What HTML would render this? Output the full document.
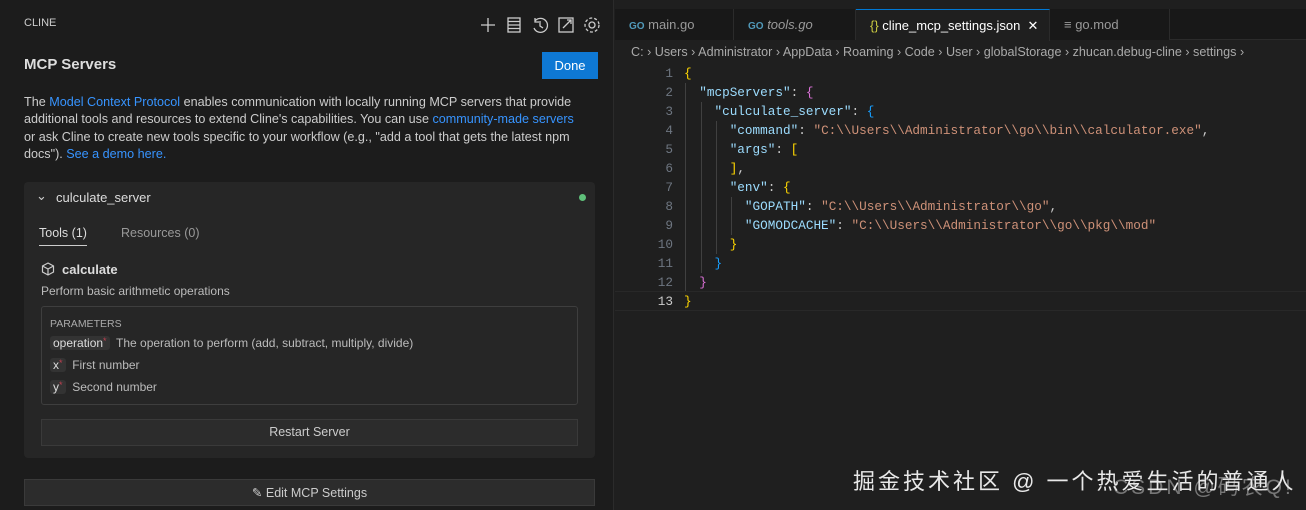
<!DOCTYPE html>
<html><head><meta charset="utf-8"><style>
*{box-sizing:border-box;margin:0;padding:0}
body{width:1306px;height:510px;overflow:hidden;background:#1f1f1f;font-family:"Segoe UI","Liberation Sans","Noto Sans CJK SC",sans-serif;color:#ccc;position:relative}
.abs{position:absolute}
#left{left:0;top:0;width:614px;height:510px;background:#1c1c1c;border-right:1px solid #2b2b2b}
.link{color:#3794ff}
#card{left:24px;top:182px;width:571px;height:276px;background:#262626;border-radius:4px}
.tag{background:#333;border-radius:3px;padding:0 3px;color:#ddd}
.star{color:#c04050;font-size:9px;vertical-align:top}
#right{left:615px;top:0;width:691px;height:510px;background:#1f1f1f}
.tab{position:absolute;top:9px;height:31px;background:#181818;font-size:13px;line-height:31px;padding-left:14px;color:#999;border-right:1px solid #2b2b2b}
.code{font-family:"Liberation Mono",monospace;font-size:12.7px;line-height:19px;white-space:pre}
.s{color:#ce9178}.k{color:#9cdcfe}.b1{color:#ffd700}.b2{color:#da70d6}.b3{color:#179fff}
.g{position:absolute;width:1px;background:#404040}
</style></head><body>
<div id="left" class="abs">
 <div class="abs" style="left:24px;top:17px;font-size:11px;color:#ccc">CLINE</div>
 <svg class="abs" style="left:478px;top:15px" width="124" height="20" fill="none" stroke="#ccc" stroke-width="1.3">
  <path d="M10 3v14M3 10h14"/>
  <rect x="30" y="3" width="12" height="14"/><path d="M30 6.5h12M30 10h12M30 13.5h12"/>
  <path d="M57 6a7 7 0 1 1 -1 7M57 3v4h4M62 6v5l3 2"/>
  <rect x="81" y="3" width="14" height="14"/><path d="M85 13l8-8M89 5h4v4"/>
  <circle cx="114" cy="10" r="3"/><circle cx="114" cy="10" r="7" stroke-dasharray="3 2"/>
 </svg>
 <div class="abs" style="left:24px;top:56px;font-size:15px;font-weight:bold;color:#ddd">MCP Servers</div>
 <div class="abs" style="left:542px;top:52px;width:56px;height:27px;background:#0e78d4;color:#fff;font-size:13px;text-align:center;line-height:27px">Done</div>
 <div class="abs" style="left:24px;top:94px;width:562px;font-size:12.6px;line-height:17.3px;color:#ccc">The <span class="link">Model Context Protocol</span> enables communication with locally running MCP servers that provide additional tools and resources to extend Cline's capabilities. You can use <span class="link">community-made servers</span> or ask Cline to create new tools specific to your workflow (e.g., "add a tool that gets the latest npm docs"). <span class="link">See a demo here.</span></div>
 <div id="card" class="abs">
  <div class="abs" style="left:12px;top:6px;font-size:13px;color:#ccc">⌄</div>
  <div class="abs" style="left:32px;top:8px;font-size:13px;color:#ddd">culculate_server</div>
  <div class="abs" style="left:555px;top:12px;width:7px;height:7px;border-radius:50%;background:#5fc07a"></div>
  <div class="abs" style="left:15px;top:44px;font-size:12.5px;color:#ddd;border-bottom:1px solid #ccc;padding-bottom:5px">Tools (1)</div>
  <div class="abs" style="left:97px;top:44px;font-size:12.5px;color:#999">Resources (0)</div>
  <svg class="abs" style="left:17px;top:80px" width="14" height="14" fill="none" stroke="#ccc" stroke-width="1.2"><path d="M7 1l5.5 3v6L7 13 1.5 10V4z M1.5 4L7 7l5.5-3M7 7v6"/></svg>
  <div class="abs" style="left:38px;top:80px;font-size:13px;font-weight:bold;color:#ddd">calculate</div>
  <div class="abs" style="left:17px;top:102px;font-size:12px;color:#bbb">Perform basic arithmetic operations</div>
  <div class="abs" style="left:17px;top:124px;width:537px;height:99px;border:1px solid #3e3e3e;border-radius:3px">
   <div class="abs" style="left:8px;top:11px;font-size:10.5px;color:#aaa">PARAMETERS</div>
   <div class="abs" style="left:8px;top:29px;font-size:12px"><span class="tag">operation<span class="star">*</span></span>&nbsp; <span style="color:#bbb">The operation to perform (add, subtract, multiply, divide)</span></div>
   <div class="abs" style="left:8px;top:51px;font-size:12px"><span class="tag">x<span class="star">*</span></span>&nbsp; <span style="color:#bbb">First number</span></div>
   <div class="abs" style="left:8px;top:73px;font-size:12px"><span class="tag">y<span class="star">*</span></span>&nbsp; <span style="color:#bbb">Second number</span></div>
  </div>
  <div class="abs" style="left:17px;top:237px;width:537px;height:27px;background:#2c2c2c;border:1px solid #3a3a3a;text-align:center;line-height:25px;font-size:12.5px;color:#ccc">Restart Server</div>
 </div>
 <div class="abs" style="left:24px;top:479px;width:571px;height:27px;background:#2c2c2c;border:1px solid #3a3a3a;text-align:center;line-height:27px;font-size:12.5px;color:#ccc">✎ Edit MCP Settings</div>
</div>
<div id="right" class="abs">
 <div class="abs" style="left:0;top:9px;width:691px;height:31px;background:#181818;border-bottom:1px solid #2b2b2b"></div>
 <div class="tab" style="left:0;width:119px"><span style="color:#519aba;font-size:10px;font-weight:bold">GO</span> main.go</div>
 <div class="tab" style="left:119px;width:122px"><span style="color:#519aba;font-size:10px;font-weight:bold">GO</span> <i>tools.go</i></div>
 <div class="tab" style="left:241px;width:194px;background:#1f1f1f;color:#fff;border-top:1px solid #0078d4;height:32px"><span style="color:#cbcb41">{}</span> cline_mcp_settings.json&nbsp; ✕</div>
 <div class="tab" style="left:435px;width:120px"><span>≡</span> go.mod</div>
 <div class="abs" style="left:16px;top:45px;font-size:12.6px;color:#aaa;white-space:nowrap">C: › Users › Administrator › AppData › Roaming › Code › User › globalStorage › zhucan.debug-cline › settings ›</div>
 <div class="g" style="left:70px;top:83px;height:209px"></div>
 <div class="g" style="left:86px;top:102px;height:171px"></div>
 <div class="g" style="left:101px;top:121px;height:133px"></div>
 <div class="g" style="left:116px;top:197px;height:38px"></div>
 <div class="abs code" style="left:16px;top:64px;width:42px;text-align:right;color:#6e7681">1
2
3
4
5
6
7
8
9
10
11
12
<span style="color:#ccc">13</span></div>
 <div class="abs code" style="left:69px;top:64px;color:#ccc"><span class="b1">{</span>
  <span class="k">"mcpServers"</span>: <span class="b2">{</span>
    <span class="k">"culculate_server"</span>: <span class="b3">{</span>
      <span class="k">"command"</span>: <span class="s">"C:\\Users\\Administrator\\go\\bin\\calculator.exe"</span>,
      <span class="k">"args"</span>: <span class="b1">[</span>
      <span class="b1">]</span>,
      <span class="k">"env"</span>: <span class="b1">{</span>
        <span class="k">"GOPATH"</span>: <span class="s">"C:\\Users\\Administrator\\go"</span>,
        <span class="k">"GOMODCACHE"</span>: <span class="s">"C:\\Users\\Administrator\\go\\pkg\\mod"</span>
      <span class="b1">}</span>
    <span class="b3">}</span>
  <span class="b2">}</span>
<span class="b1">}</span></div>
 <div class="abs" style="left:0;top:291px;width:691px;height:20px;border-top:1px solid #282828;border-bottom:1px solid #282828"></div>
 <div class="abs" style="left:498px;top:471px;font-size:21px;letter-spacing:3px;color:#777;font-family:'Liberation Sans','Noto Sans CJK SC',sans-serif;white-space:nowrap">CSDN @码农Q!</div>
 <div class="abs" style="left:238px;top:464px;font-size:22px;letter-spacing:3px;color:#e8e8e8;font-family:'Liberation Sans','Noto Sans CJK SC',sans-serif;white-space:nowrap">掘金技术社区 @ 一个热爱生活的普通人</div>
</div>
</body></html>
